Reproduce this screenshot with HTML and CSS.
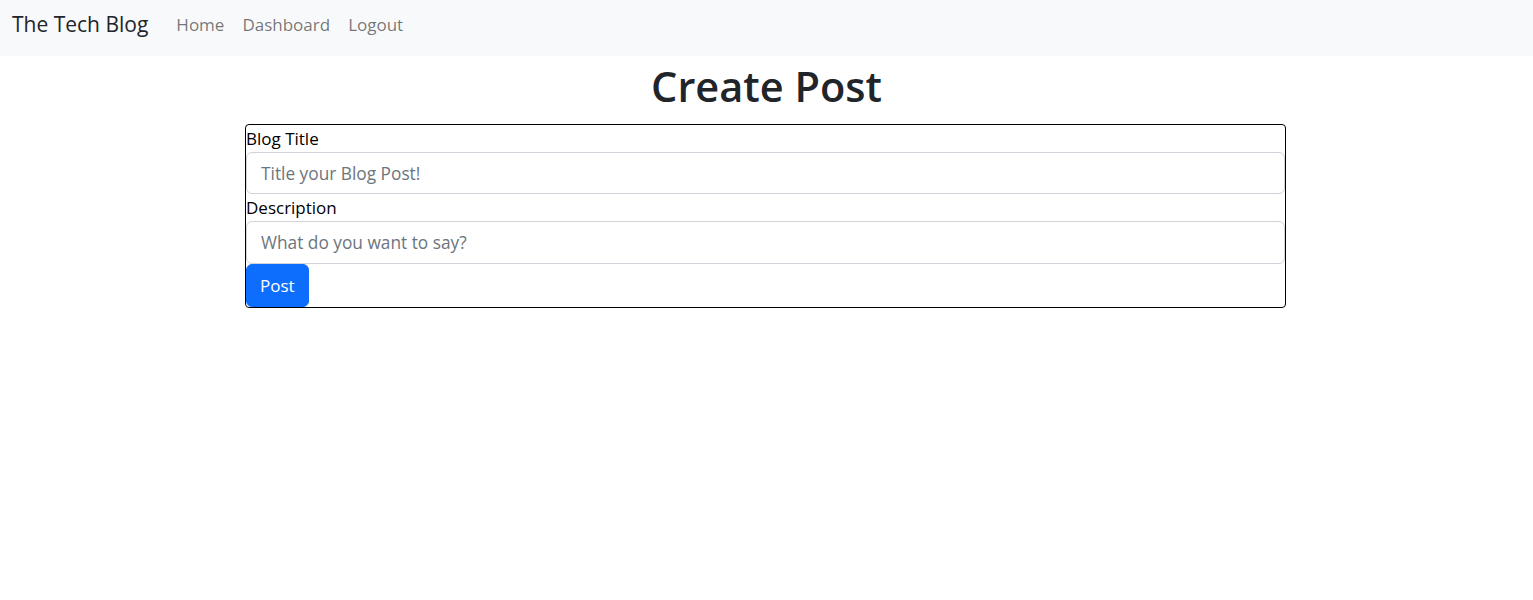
FILE: index.html
```html
<!DOCTYPE html>
<html lang="en">
<head>
<meta charset="utf-8">
<title>The Tech Blog</title>
<link rel="stylesheet" href="styles.css">
</head>
<body>
<nav class="navbar">
  <a class="brand" href="#">The Tech Blog</a>
  <ul class="nav-links">
    <li><a href="#">Home</a></li>
    <li><a href="#">Dashboard</a></li>
    <li><a href="#">Logout</a></li>
  </ul>
</nav>
<main class="page">
  <h1 class="page-title">Create Post</h1>
  <form class="post-form">
    <label class="field-label" for="title">Blog Title</label>
    <input class="field-input" id="title" type="text" placeholder="Title your Blog Post!">
    <label class="field-label" for="desc">Description</label>
    <input class="field-input field-input-tall" id="desc" type="text" placeholder="What do you want to say?">
    <div class="actions"><button class="btn-post" type="submit">Post</button></div>
  </form>
</main>
</body>
</html>
```
FILE: styles.css
```css
* { box-sizing: border-box; }
html, body { margin: 0; padding: 0; }
body {
  font-family: "Open Sans", "Noto Sans", sans-serif;
  color: #212529;
  background: #fff;
  font-size: 16px;
  line-height: 1.5;
}
.navbar {
  height: 56px;
  background: #f8f9fa;
  display: flex;
  align-items: center;
  padding: 0 12px 6px;
}
.brand {
  font-size: 21px;
  color: #212529;
  text-decoration: none;
  margin-right: 20px;
}
.nav-links {
  list-style: none;
  display: flex;
  margin: 0;
  padding: 0;
  gap: 2px;
}
.nav-links a {
  display: block;
  padding: 8px;
  font-size: 17px;
  color: rgba(0, 0, 0, 0.55);
  text-decoration: none;
}
.page {
  display: flex;
  flex-direction: column;
  align-items: center;
}
.page-title {
  margin: 0;
  font-size: 41.5px;
  font-weight: 600;
  line-height: 60px;
  text-align: center;
}
.post-form {
  margin: 8px 2px 0 0;
  width: 1041px;
  border: 1px solid #000;
  border-radius: 4px;
  display: flex;
  flex-direction: column;
}
.field-label {
  display: block;
  height: 27px;
  line-height: 27px;
  font-size: 17px;
  color: #000;
}
.field-input {
  display: block;
  width: 100%;
  height: 42px;
  padding: 7px 14px;
  font-family: inherit;
  font-size: 17.3px;
  color: #212529;
  border: 1px solid #ced4da;
  border-radius: 6px;
  outline: none;
}
.field-input-tall { height: 43px; }
.field-input::placeholder { color: #6c757d; }
.actions { display: flex; }
.btn-post {
  height: 43px;
  padding: 0 13px;
  font-family: inherit;
  font-size: 17px;
  color: #fff;
  background: #0d6efd;
  border: 1px solid #0d6efd;
  border-radius: 6px;
}
```
